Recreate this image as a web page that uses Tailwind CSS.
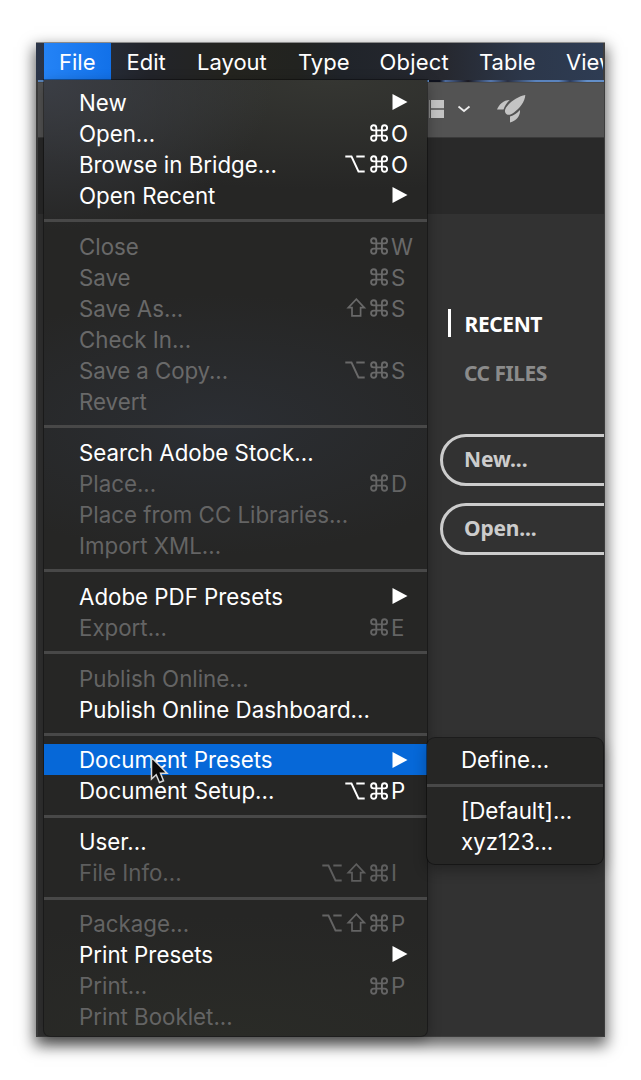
<!DOCTYPE html>
<html lang="en">
<head>
  <meta charset="utf-8">
  <title>File menu</title>
  <script src="https://cdn.jsdelivr.net/npm/@tailwindcss/browser@4"></script>
</head>
<body class="bg-white w-[641px] h-[1080px] overflow-hidden font-['Inter',sans-serif]">
  <!-- modifier key glyphs -->
  <svg class="hidden">
    <symbol id="cmd" viewBox="0 0 23 24">
      <path d="M8.3 9.400H5.600A2.600 2.600 0 1 1 8.300 6.700V17.300A2.600 2.600 0 1 1 5.600 14.600H16.600A2.600 2.600 0 1 1 13.900 17.300V6.700A2.600 2.600 0 1 1 16.600 9.400H8.300" fill="none" stroke="currentColor" stroke-width="1.900"/>
    </symbol>
    <symbol id="opt" viewBox="0 0 23 24">
      <path d="M.3 4.500H6.500L13.500 19.500H19.700M11.300 4.500H19.700" fill="none" stroke="currentColor" stroke-width="1.900"/>
    </symbol>
    <symbol id="shift" viewBox="0 0 23 24">
      <path d="M11.300 3.200L19.300 11.700H15.600V19.800H7V11.700H3.300Z" fill="none" stroke="currentColor" stroke-width="1.700"/>
    </symbol>
    <symbol id="arrow" viewBox="0 0 16 16">
      <path d="M.5 0L15.500 8L.5 16Z" fill="currentColor"/>
    </symbol>
  </svg>

  <div class="relative mt-[42px] ml-[36px] w-[569px] h-[995px] bg-[#3d3d3d] shadow-[0_7px_14px_2px_rgba(0,0,0,0.6)] border-t border-[#8a8a8a]">
    <!-- menu bar -->
    <div class="flex h-[37px] w-[567px] overflow-hidden pl-2 text-white text-[22px] leading-[38px] bg-[linear-gradient(90deg,#2b3548_0,#262c38_12%,#22242a_20%,#24241f_34%,#222320_46%,#20242a_54%,#26282f_72%,#2c374a_86%,#2e3c53_100%)]">
      <div class="shrink-0 w-[67px] pl-[15px] bg-[linear-gradient(90deg,#2483f6,#1271e9)]"><span>File</span></div>
      <div class="shrink-0 w-[71px] pl-[15.500px]"><span>Edit</span></div>
      <div class="shrink-0 w-[101px] pl-[15px]"><span>Layout</span></div>
      <div class="shrink-0 w-[81px] pl-[15px]"><span>Type</span></div>
      <div class="shrink-0 w-[100px] pl-[15.500px]"><span class="tracking-[0.2px]">Object</span></div>
      <div class="shrink-0 w-[87px] pl-[15px]"><span>Table</span></div>
      <div class="shrink-0 w-[80px] pl-[15px]"><span>View</span></div>
    </div>

    <!-- application window -->
    <div class="ml-[2px] w-[565.5px] h-[956px] overflow-hidden bg-[#323232]">
      <div class="h-[2px] bg-[linear-gradient(90deg,#5b86bd_0,#5b86bd_69%,#10131f_69%,#10131f_71%,#4d6a9c_72%,#1b1a22_76%,#5577ad_80%,#2a3042_83%,#5a83bd_88%,#5a83bd_92%,#2c3b5b_94%,#638fc9_97%,#638fc9_100%)]"></div>
      <div class="flex items-center h-[55px] pl-[391px] bg-[#535353] border-t border-[#4a4a4a]">
        <svg class="shrink-0 w-[15px] h-[18px] mb-[2px]" viewBox="0 0 15 18">
          <path d="M0 0H.5V18H0ZM2 0H15V8.300H2ZM2 9.800H15V18H2Z" fill="#c4c4c4"/>
        </svg>
        <svg class="shrink-0 ml-[13px] w-[14px] h-[8px] mb-[2px]" viewBox="0 0 14 8">
          <path d="M1.500 1.500L7 6L12.500 1.500" fill="none" stroke="#ececec" stroke-width="1.800"/>
        </svg>
        <svg class="shrink-0 ml-[26px] w-[30px] h-[30px] mb-[2px]" viewBox="0 0 30 30">
          <g fill="#c4c4c4">
            <path d="M28.300 1C22 2 13.500 7.500 10.300 12C7.700 15 7.300 17.800 8.800 19.500C10.500 21.700 13.500 21 17 18.500C22.500 14.300 28 8 28.300 1Z"/>
            <path d="M12.700 6C6.500 6 2 10.500 0 15.500H6.500C7.800 11.500 10 8.700 12.700 6Z"/>
            <path d="M23 16C20 19.200 17 21.300 13 22.500V28.500C19 27 23.500 22 23 16Z"/>
          </g>
        </svg>
      </div>
      <div class="h-[77px] bg-[#292929] border-t border-[#3a3a3a]"></div>
      <div class="pl-[402px] pt-[95px] font-['Noto_Sans',sans-serif] font-bold text-[21px] whitespace-nowrap">
        <div class="flex items-center h-[28px] ml-[8px] border-l-[3px] border-white pl-[13.500px] text-white"><span class="pt-[3px] tracking-[-0.4px]">RECENT</span></div>
        <div class="flex items-center h-[28px] mt-[22px] pl-[24px] text-[#8b8b8b]"><span class="pt-[2px] tracking-[-0.5px]">CC FILES</span></div>
        <div class="flex items-center h-[52px] mt-[47px] w-[240px] rounded-full border-[3.500px] border-[#cccccc] pl-[21px] text-[#cccccc]"><span class="tracking-[-0.1px]">New...</span></div>
        <div class="flex items-center h-[52px] mt-[17px] w-[240px] rounded-full border-[3.500px] border-[#cccccc] pl-[21px] text-[#cccccc]"><span class="tracking-[-0.2px]">Open...</span></div>
      </div>
    </div>

    <!-- File menu -->
    <div class="absolute left-[8px] top-[37px] w-[383px] h-[956px] pt-[6.600px] rounded-b-md shadow-[0_0_0_1px_rgba(0,0,0,0.35),0_4px_14px_rgba(0,0,0,0.35)] bg-[#262625] bg-[radial-gradient(230px_150px_at_0_0,#3b3e45,transparent),radial-gradient(420px_110px_at_75%_0,#353632,transparent),radial-gradient(300px_130px_at_45%_36%,#2b2e33,transparent),radial-gradient(420px_120px_at_50%_100%,#2a2b27,transparent)] text-[22.300px] leading-[31px] text-white whitespace-nowrap">
      <div class="flex items-center h-[31.100px] pl-[35px]"><span>New</span><svg class="ml-auto mr-[19px] size-[16px]"><use href="#arrow"/></svg></div>
      <div class="flex items-center h-[31.100px] pl-[35px]"><span>Open...</span><svg class="ml-auto w-[23px] h-[24px]"><use href="#cmd"/></svg><span class="w-[36px]">O</span></div>
      <div class="flex items-center h-[31.100px] pl-[35px]"><span>Browse in Bridge...</span><svg class="ml-auto w-[23px] h-[24px]"><use href="#opt"/></svg><svg class="w-[23px] h-[24px]"><use href="#cmd"/></svg><span class="w-[36px]">O</span></div>
      <div class="flex items-center h-[31.100px] pl-[35px]"><span>Open Recent</span><svg class="ml-auto mr-[19px] size-[16px]"><use href="#arrow"/></svg></div>
      <div class="flex items-center h-[19.600px]"><div class="w-full h-[3px] bg-[#484848]"></div></div>

      <div class="flex items-center h-[31.100px] pl-[35px] text-[#696969]"><span>Close</span><svg class="ml-auto w-[23px] h-[24px]"><use href="#cmd"/></svg><span class="w-[36px]">W</span></div>
      <div class="flex items-center h-[31.100px] pl-[35px] text-[#696969]"><span>Save</span><svg class="ml-auto w-[23px] h-[24px]"><use href="#cmd"/></svg><span class="w-[36px]">S</span></div>
      <div class="flex items-center h-[31.100px] pl-[35px] text-[#696969]"><span>Save As...</span><svg class="ml-auto w-[23px] h-[24px]"><use href="#shift"/></svg><svg class="w-[23px] h-[24px]"><use href="#cmd"/></svg><span class="w-[36px]">S</span></div>
      <div class="flex items-center h-[31.100px] pl-[35px] text-[#696969]"><span>Check In...</span></div>
      <div class="flex items-center h-[31.100px] pl-[35px] text-[#696969]"><span class="tracking-[-0.1px]">Save a Copy...</span><svg class="ml-auto w-[23px] h-[24px]"><use href="#opt"/></svg><svg class="w-[23px] h-[24px]"><use href="#cmd"/></svg><span class="w-[36px]">S</span></div>
      <div class="flex items-center h-[31.100px] pl-[35px] text-[#696969]"><span>Revert</span></div>
      <div class="flex items-center h-[19.600px]"><div class="w-full h-[3px] bg-[#484848]"></div></div>

      <div class="flex items-center h-[31.100px] pl-[35px]"><span>Search Adobe Stock...</span></div>
      <div class="flex items-center h-[31.100px] pl-[35px] text-[#646464]"><span>Place...</span><svg class="ml-auto w-[23px] h-[24px]"><use href="#cmd"/></svg><span class="w-[36px]">D</span></div>
      <div class="flex items-center h-[31.100px] pl-[35px] text-[#646464]"><span>Place from CC Libraries...</span></div>
      <div class="flex items-center h-[31.100px] pl-[35px] text-[#646464]"><span>Import XML...</span></div>
      <div class="flex items-center h-[19.600px]"><div class="w-full h-[3px] bg-[#484848]"></div></div>

      <div class="flex items-center h-[31.100px] pl-[35px]"><span>Adobe PDF Presets</span><svg class="ml-auto mr-[19px] size-[16px]"><use href="#arrow"/></svg></div>
      <div class="flex items-center h-[31.100px] pl-[35px] text-[#646464]"><span>Export...</span><svg class="ml-auto w-[23px] h-[24px]"><use href="#cmd"/></svg><span class="w-[36px]">E</span></div>
      <div class="flex items-center h-[19.600px]"><div class="w-full h-[3px] bg-[#484848]"></div></div>

      <div class="flex items-center h-[31.100px] pl-[35px] text-[#646464]"><span>Publish Online...</span></div>
      <div class="flex items-center h-[31.100px] pl-[35px]"><span>Publish Online Dashboard...</span></div>
      <div class="flex items-center h-[19.600px]"><div class="w-full h-[3px] bg-[#484848]"></div></div>

      <div class="flex items-center h-[31.100px] pl-[35px] bg-[#0668d8]"><span>Document Presets</span><svg class="ml-auto mr-[19px] size-[16px]"><use href="#arrow"/></svg></div>
      <div class="flex items-center h-[31.100px] pl-[35px]"><span>Document Setup...</span><svg class="ml-auto w-[23px] h-[24px]"><use href="#opt"/></svg><svg class="w-[23px] h-[24px]"><use href="#cmd"/></svg><span class="w-[36px]">P</span></div>
      <div class="flex items-center h-[19.600px]"><div class="w-full h-[3px] bg-[#484848]"></div></div>

      <div class="flex items-center h-[31.100px] pl-[35px]"><span>User...</span></div>
      <div class="flex items-center h-[31.100px] pl-[35px] text-[#5e5e5e]"><span>File Info...</span><svg class="ml-auto w-[23px] h-[24px]"><use href="#opt"/></svg><svg class="w-[23px] h-[24px]"><use href="#shift"/></svg><svg class="w-[23px] h-[24px]"><use href="#cmd"/></svg><span class="w-[36px]">I</span></div>
      <div class="flex items-center h-[19.600px]"><div class="w-full h-[3px] bg-[#484848]"></div></div>

      <div class="flex items-center h-[31.100px] pl-[35px] text-[#646464]"><span>Package...</span><svg class="ml-auto w-[23px] h-[24px]"><use href="#opt"/></svg><svg class="w-[23px] h-[24px]"><use href="#shift"/></svg><svg class="w-[23px] h-[24px]"><use href="#cmd"/></svg><span class="w-[36px]">P</span></div>
      <div class="flex items-center h-[31.100px] pl-[35px]"><span>Print Presets</span><svg class="ml-auto mr-[19px] size-[16px]"><use href="#arrow"/></svg></div>
      <div class="flex items-center h-[31.100px] pl-[35px] text-[#646464]"><span>Print...</span><svg class="ml-auto w-[23px] h-[24px]"><use href="#cmd"/></svg><span class="w-[36px]">P</span></div>
      <div class="flex items-center h-[31.100px] pl-[35px] text-[#646464]"><span>Print Booklet...</span></div>
    </div>

    <!-- Document Presets submenu -->
    <div class="absolute left-[391px] top-[695px] w-[176px] h-[126px] pt-[6px] rounded-lg bg-[#262625] shadow-[0_0_0_1px_rgba(0,0,0,0.4),0_6px_14px_rgba(0,0,0,0.3)] text-[22.300px] leading-[31px] text-white whitespace-nowrap">
      <div class="flex items-center h-[31px] pl-[34px]"><span>Define...</span></div>
      <div class="flex items-center h-[20px]"><div class="w-full h-[3px] bg-[#484848]"></div></div>
      <div class="flex items-center h-[31px] pl-[34px]"><span>[Default]...</span></div>
      <div class="flex items-center h-[31px] pl-[34px]"><span>xyz123...</span></div>
    </div>

    <!-- pointer -->
    <svg class="absolute left-[114px] top-[713px] w-[20px] h-[28px]" viewBox="0 0 20 28">
      <path d="M1.500 1.500V23L6.200 18.800L9.500 26.500L13.500 24.800L10.500 17.200H17Z" fill="#0a0a0a" stroke="#d9d9d9" stroke-width="1.500"/>
    </svg>
  </div>
</body>
</html>
